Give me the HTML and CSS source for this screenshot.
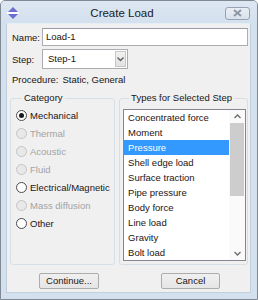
FILE: index.html
```html
<!DOCTYPE html>
<html>
<head>
<meta charset="utf-8">
<link rel="stylesheet" href="styles.css">
</head>
<body>
<div class="window">
  <div class="titlebar">
    <svg class="app-icon" width="12" height="12" viewBox="0 0 12 12">
      <polygon points="6,0 11,5 1,5" fill="#6b6fd0"/>
      <polygon points="1,7 11,7 6,12" fill="#6b6fd0"/>
      <rect x="0" y="5" width="12" height="2" fill="#ffffff"/>
    </svg>
    <div class="title">Create Load</div>
    <div class="close">
      <svg width="11" height="8" viewBox="0 0 11 8">
        <path d="M2 1 L9 7 M9 1 L2 7" stroke="#8e98a4" stroke-width="2" fill="none"/>
      </svg>
    </div>
  </div>
  <div class="client">
    <div class="row name-row">
      <span class="lbl">Name:</span>
      <div class="input">Load-1</div>
    </div>
    <div class="row step-row">
      <span class="lbl">Step:</span>
      <div class="select">
        <span class="sel-text">Step-1</span>
        <span class="drop">
          <svg width="7" height="5" viewBox="0 0 7 5"><path d="M0.5 0.5 L3.5 3.5 L6.5 0.5" stroke="#606060" stroke-width="1.4" fill="none"/></svg>
        </span>
      </div>
    </div>
    <div class="proc"><span>Procedure:</span><span class="proc-val">Static, General</span></div>
    <div class="groups">
      <fieldset class="group cat">
        <legend>Category</legend>
        <div class="radio"><span class="dot on"></span>Mechanical</div>
        <div class="radio dis"><span class="dot"></span>Thermal</div>
        <div class="radio dis"><span class="dot"></span>Acoustic</div>
        <div class="radio dis"><span class="dot"></span>Fluid</div>
        <div class="radio"><span class="dot"></span>Electrical/Magnetic</div>
        <div class="radio dis"><span class="dot"></span>Mass diffusion</div>
        <div class="radio"><span class="dot"></span>Other</div>
      </fieldset>
      <fieldset class="group types">
        <legend>Types for Selected Step</legend>
        <div class="list">
          <div class="items">
            <div class="item">Concentrated force</div>
            <div class="item">Moment</div>
            <div class="item sel">Pressure</div>
            <div class="item">Shell edge load</div>
            <div class="item">Surface traction</div>
            <div class="item">Pipe pressure</div>
            <div class="item">Body force</div>
            <div class="item">Line load</div>
            <div class="item">Gravity</div>
            <div class="item">Bolt load</div>
          </div>
          <div class="scrollbar">
            <div class="arrow">
              <svg width="7" height="5" viewBox="0 0 7 5"><path d="M0.5 4 L3.5 1 L6.5 4" stroke="#6a6a6a" stroke-width="1.3" fill="none"/></svg>
            </div>
            <div class="track"><div class="thumb"></div></div>
            <div class="arrow">
              <svg width="7" height="5" viewBox="0 0 7 5"><path d="M0.5 1 L3.5 4 L6.5 1" stroke="#6a6a6a" stroke-width="1.3" fill="none"/></svg>
            </div>
          </div>
        </div>
      </fieldset>
    </div>
    <div class="buttons">
      <div class="btn cont">Continue...</div>
      <div class="btn cancel">Cancel</div>
    </div>
  </div>
</div>
</body>
</html>
```

FILE: styles.css
```css
* { box-sizing: border-box; }
html, body { margin: 0; padding: 0; background: #ffffff; }
body {
  font-family: "Liberation Sans", Arial, sans-serif;
  font-size: 9.5px;
  color: #1b1414;
}
.window {
  width: 258px;
  height: 300px;
  border: 1px solid #7f8893;
  border-radius: 5px 5px 0 0;
  background: #d3e0ee;
  display: flex;
  flex-direction: column;
}
.titlebar {
  height: 22px;
  display: flex;
  align-items: center;
  padding-left: 6px;
  padding-right: 7px;
  background: linear-gradient(#dde7f2, #d3e0ee);
  border-radius: 4px 4px 0 0;
}
.app-icon { flex: none; margin-top: 1px; }
.title {
  flex: 1;
  text-align: center;
  font-size: 11.5px;
  color: #1a1a1a;
  padding-top: 2px;
}
.close {
  flex: none;
  width: 25px;
  height: 13px;
  margin-top: 2px;
  border: 1px solid #97a3b2;
  border-radius: 3px;
  background: linear-gradient(#e9eef4, #d9e2ec);
  display: flex;
  align-items: center;
  justify-content: center;
}
.client {
  margin: 0 6px 0 5px;
  height: 270px;
  background: #f0f0f0;
  border: 1px solid #c1cfdf;
  border-top-color: #e6edf5;
  padding: 4px 2px 3px 0;
  display: flex;
  flex-direction: column;
}
.row { display: flex; align-items: center; }
.lbl { width: 35px; padding-left: 5px; flex: none; }
.name-row { height: 18px; }
.input {
  width: 206px;
  height: 18px;
  border: 1px solid #abadb3;
  border-top-color: #9a9ca4;
  background: #ffffff;
  padding-left: 3px;
  line-height: 16px;
}
.step-row { height: 20px; margin-top: 3px; }
.select {
  width: 86px;
  height: 20px;
  border: 1px solid #abadb3;
  background: #ffffff;
  display: flex;
}
.sel-text { flex: 1; padding-left: 5px; line-height: 18px; }
.drop {
  width: 11px;
  margin: 1px;
  border: 1px solid #c8c8c8;
  background: linear-gradient(#f1f1f1, #e2e2e2);
  display: flex;
  align-items: center;
  justify-content: center;
}
.proc {
  margin-top: 4px;
  height: 14px;
  line-height: 14px;
  padding-left: 5px;
}
.proc-val { margin-left: 4px; }
.groups {
  margin-top: 4px;
  height: 174px;
  display: flex;
  padding-left: 3px;
  gap: 4px;
}
.group {
  margin: 0;
  border: 1px solid #d5dfe5;
  border-radius: 3px;
  min-width: 0;
}
.group legend {
  padding: 0 2px;
  margin-left: 6px;
  line-height: 14px;
}
.cat {
  width: 106px;
  padding: 1px 0 0 5px;
}
.radio {
  height: 18px;
  display: flex;
  align-items: center;
  white-space: nowrap;
}
.radio.dis { color: #a3a3a3; }
.dot {
  width: 11px;
  height: 11px;
  border-radius: 50%;
  border: 1px solid #4a4a4a;
  background: #ffffff;
  margin-right: 3px;
  flex: none;
  display: flex;
  align-items: center;
  justify-content: center;
}
.dis .dot {
  border-color: #c4c4c4;
  background: #e8e8e8;
}
.dot.on::after {
  content: "";
  width: 5px;
  height: 5px;
  border-radius: 50%;
  background: #1a1a1a;
}
.types {
  width: 130px;
  padding: 4px 1px 3px 3px;
}
.list {
  width: 123px;
  height: 152px;
  border: 1px solid #828790;
  background: #ffffff;
  display: flex;
}
.items { flex: 1; }
.item {
  height: 15px;
  line-height: 15px;
  padding-left: 4px;
  white-space: nowrap;
}
.item.sel { background: #3399ff; color: #ffffff; }
.scrollbar {
  width: 16px;
  display: flex;
  flex-direction: column;
  background: #fafafa;
}
.arrow {
  height: 13px;
  display: flex;
  align-items: center;
  justify-content: center;
}
.track { flex: 1; padding: 0 1px; }
.thumb {
  margin-top: 0px;
  height: 73px;
  background: #cdcdcd;
}
.buttons {
  margin-top: 8px;
  display: flex;
  padding-left: 32px;
  gap: 62px;
}
.btn {
  width: 60px;
  height: 16px;
  border: 1px solid #acacac;
  border-radius: 2px;
  background: linear-gradient(#f0f0f0, #e5e5e5);
  text-align: center;
  line-height: 14px;
}
.btn.cancel { width: 59px; }
```
